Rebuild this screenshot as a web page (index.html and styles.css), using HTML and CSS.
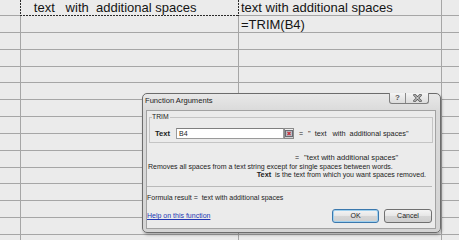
FILE: index.html
```html
<!DOCTYPE html>
<html>
<head>
<meta charset="utf-8">
<title>TRIM</title>
<link rel="stylesheet" href="styles.css">
</head>
<body>
<div class="sheet">
  <div class="cell"></div><div class="cell sel">   text   with  additional spaces</div><div class="cell">text with additional spaces</div><div class="cell d"></div>
  <div class="cell"></div><div class="cell"></div><div class="cell">=TRIM(B4)</div><div class="cell d"></div>
  <div class="cell"></div><div class="cell"></div><div class="cell"></div><div class="cell d"></div>
  <div class="cell"></div><div class="cell"></div><div class="cell"></div><div class="cell d"></div>
  <div class="cell"></div><div class="cell"></div><div class="cell"></div><div class="cell d"></div>
  <div class="cell"></div><div class="cell"></div><div class="cell"></div><div class="cell d"></div>
  <div class="cell"></div><div class="cell"></div><div class="cell"></div><div class="cell d"></div>
  <div class="cell"></div><div class="cell"></div><div class="cell"></div><div class="cell d"></div>
  <div class="cell"></div><div class="cell"></div><div class="cell"></div><div class="cell d"></div>
  <div class="cell"></div><div class="cell"></div><div class="cell"></div><div class="cell d"></div>
  <div class="cell"></div><div class="cell"></div><div class="cell"></div><div class="cell d"></div>
  <div class="cell"></div><div class="cell"></div><div class="cell"></div><div class="cell d"></div>
  <div class="cell"></div><div class="cell"></div><div class="cell"></div><div class="cell d"></div>
  <div class="cell"></div><div class="cell"></div><div class="cell"></div><div class="cell d"></div>
  <div class="cell"></div><div class="cell"></div><div class="cell"></div><div class="cell d"></div>
</div>

<div class="dialog">
  <div class="titlebar">
    <span class="title">Function Arguments</span>
    <div class="caps">
      <span class="cap help">?</span>
      <span class="cap close">
        <svg width="9" height="8" viewBox="0 0 9 8"><path d="M1.5 1 L7.5 7 M7.5 1 L1.5 7" stroke="#5a5a5a" stroke-width="2.6" stroke-linecap="square"/><path d="M1.5 1 L7.5 7 M7.5 1 L1.5 7" stroke="#f2f2f2" stroke-width="1" stroke-linecap="square"/></svg>
      </span>
    </div>
  </div>
  <div class="client">
    <fieldset class="group">
      <legend>TRIM</legend>
      <div class="arg">
        <span class="arg-name">Text</span>
        <span class="input">B4</span>
        <span class="refbtn"><svg width="8" height="7" viewBox="0 0 8 7"><rect x="0.5" y="0.5" width="7" height="6" fill="#b8bcc4" stroke="#6a6a72"/><path d="M2.5 2 L5.5 5 M5.5 2 L2.5 5" stroke="#c8323c" stroke-width="1.2"/></svg></span>
        <span class="eq">=</span>
        <span class="val">"  text   with  additional spaces"</span>
      </div>
    </fieldset>
    <div class="result"><span class="eq2">=</span><span class="val2">"text with additional spaces"</span></div>
    <div class="desc">Removes all spaces from a text string except for single spaces between words.</div>
    <div class="argdesc"><b>Text</b>  is the text from which you want spaces removed.</div>
    <div class="sep"></div>
    <div class="formula">Formula result =  text with additional spaces</div>
    <div class="bottom">
      <a class="help-link" href="#">Help on this function</a>
      <span class="btn ok">OK</span>
      <span class="btn cancel">Cancel</span>
    </div>
  </div>
</div>
</body>
</html>
```

FILE: styles.css
```css
* { box-sizing: border-box; }
html, body { margin: 0; padding: 0; }
body {
  width: 459px;
  height: 240px;
  overflow: hidden;
  position: relative;
  background: #ebebeb;
  font-family: "Liberation Sans", Arial, sans-serif;
}

/* spreadsheet */
.sheet {
  display: grid;
  grid-template-columns: 21px 218px 203px 1fr;
  grid-template-rows: 16px repeat(14, 16.85px);
}
.cell {
  border-right: 1px solid #a6a6a6;
  border-bottom: 1px solid #a6a6a6;
  font-size: 13px;
  line-height: 15px;
  padding-left: 2px;
  white-space: pre;
  display: flex;
  align-items: flex-end;
  color: #141414;
}
.cell.d { border-right: 0; }
.sel { position: relative; }
.sel::after {
  content: "";
  position: absolute;
  left: -1px;
  right: -1px;
  top: 0;
  bottom: -1px;
  background:
    repeating-linear-gradient(to bottom, #2a2a2a 0 2px, #ebebeb 2px 3px) left top / 1px 100% no-repeat,
    repeating-linear-gradient(to bottom, #2a2a2a 0 2px, #ebebeb 2px 3px) right top / 1px 100% no-repeat,
    repeating-linear-gradient(to right, #2a2a2a 0 2px, #ebebeb 2px 3px) left bottom / 100% 1px no-repeat;
}

/* dialog */
.dialog {
  position: absolute;
  left: 142px;
  top: 93px;
  width: 299px;
  height: 140px;
  border: 1px solid #6c6c6c;
  border-radius: 5px;
  background: linear-gradient(#e8e8e8, #d9d9d9 18px, #d4d4d4);
  box-shadow: 1px 2px 3px rgba(0, 0, 0, 0.28);
  padding: 0 4px 3px 3px;
  display: flex;
  flex-direction: column;
  font-size: 7px;
  line-height: 8px;
  color: #1c1c1c;
}
.titlebar {
  height: 16px;
  display: flex;
  align-items: flex-start;
  flex: none;
}
.title {
  margin-top: 3px;
  margin-left: -1px;
  font-size: 7.6px;
}
.caps {
  margin-left: auto;
  margin-right: 7px;
  margin-top: -1px;
  display: flex;
  height: 11px;
  border: 1px solid #7e7e7e;
  border-top: 0;
  border-radius: 0 0 3px 3px;
  background: linear-gradient(#f4f4f4, #dcdcdc);
}
.cap {
  display: flex;
  align-items: center;
  justify-content: center;
}
.help {
  width: 16px;
  border-right: 1px solid #8a8a8a;
  font-size: 8px;
  font-weight: bold;
  color: #555;
}
.close { width: 22px; }

.client {
  flex: 1;
  border: 1px solid #a2a2a2;
  background: #ebebeb;
  display: flex;
  flex-direction: column;
}
.group {
  margin: 2px 2px 0 2px;
  padding: 0 2px 3px 2px;
  border: 1px solid #c4c4c4;
  min-width: 0;
}
.group legend {
  padding: 0 1px 0 0;
  font-size: 6.8px;
  line-height: 8px;
}
.arg {
  margin-top: 7px;
  height: 11px;
  display: flex;
  align-items: center;
}
.arg-name {
  margin-left: 3px;
  width: 21px;
  font-weight: bold;
  font-size: 7.6px;
}
.input {
  width: 108px;
  height: 11px;
  border: 1px solid #9a9a9a;
  border-top-color: #7f7f7f;
  background: #fff;
  padding-left: 2px;
  line-height: 9px;
}
.refbtn {
  width: 10px;
  height: 11px;
  border: 1px solid #8a8a8a;
  background: linear-gradient(#f0f0f0, #d2d2d2);
  display: flex;
  align-items: center;
  justify-content: center;
}
.eq { margin-left: 5px; }
.val { margin-left: 5px; white-space: pre; font-size: 7.3px; }
.result {
  margin-top: 11px;
  padding-left: 148px;
  white-space: pre;
}
.val2 { margin-left: 5px; font-size: 7.6px; }
.desc {
  margin-top: 1px;
  padding-left: 1px;
}
.argdesc {
  text-align: right;
  padding-right: 9px;
  white-space: pre;
}
.argdesc b { font-size: 7.3px; }
.sep {
  margin: 7px 3px 0 0;
  border-top: 1px solid #b9b9b9;
}
.formula {
  margin-top: 7px;
  white-space: pre;
}
.bottom {
  margin-top: 7px;
  height: 14px;
  display: flex;
  align-items: center;
  padding-right: 3px;
}
.help-link {
  color: #2236b4;
  text-decoration: underline;
}
.btn {
  height: 14px;
  border-radius: 3px;
  display: flex;
  align-items: center;
  justify-content: center;
  background: linear-gradient(#f4f4f4, #e6e6e6 50%, #d6d6d6 51%, #cfcfcf);
  color: #1c1c1c;
}
.ok {
  margin-left: auto;
  width: 47px;
  border: 1px solid #3b78ad;
  box-shadow: inset 0 0 0 1px #9fd0ee;
}
.cancel {
  margin-left: 5px;
  width: 48px;
  border: 1px solid #707070;
}
```
